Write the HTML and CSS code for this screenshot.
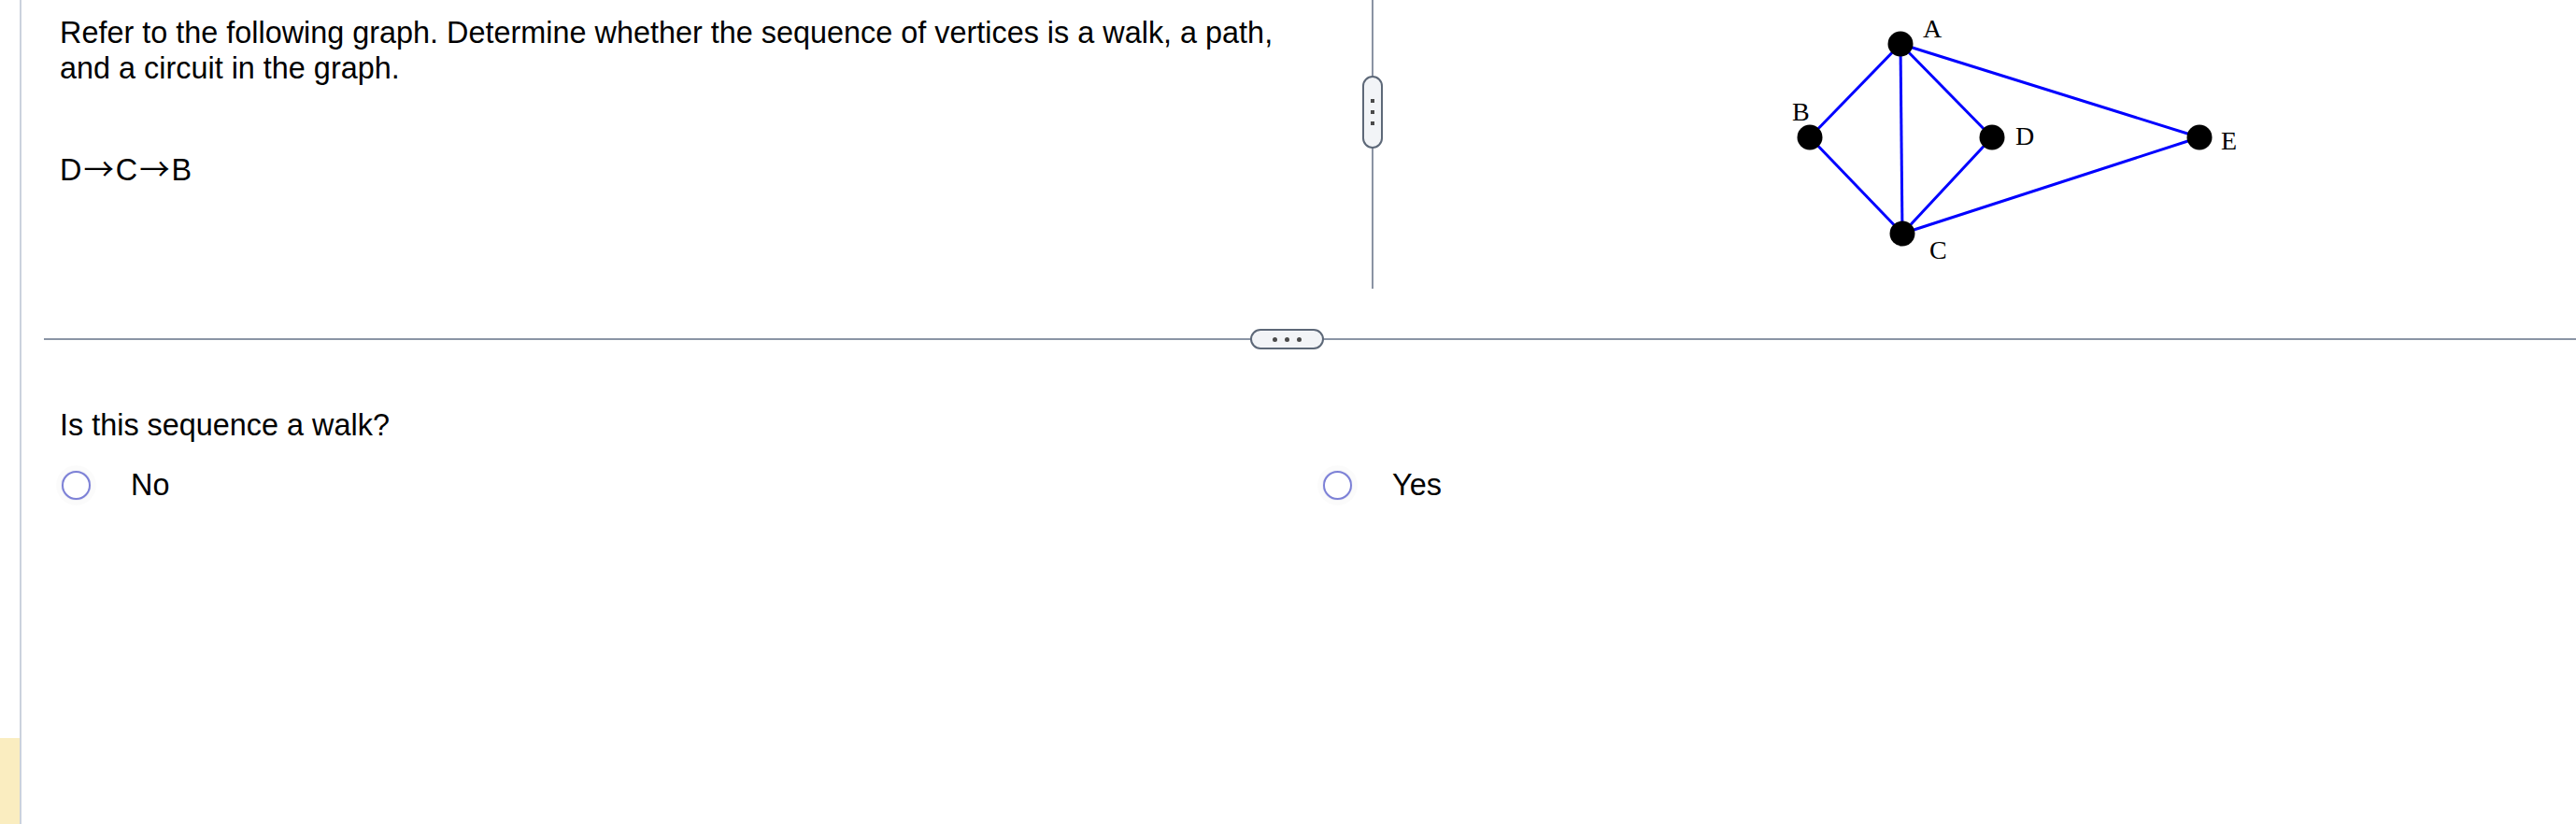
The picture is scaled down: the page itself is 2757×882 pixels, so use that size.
FILE: index.html
```html
<!DOCTYPE html>
<html>
<head>
<meta charset="utf-8">
<link rel="stylesheet" href="styles.css">
</head>
<body>
<div class="page">
  <div class="gutter"><div class="flag"></div></div>
  <div class="main">
    <div class="top">
      <div class="left-pane">
        <p class="prompt">Refer to the following graph. Determine whether the sequence of vertices is a walk, a path,<br>and a circuit in the graph.</p>
        <p class="seq">D<span class="arr">→</span>C<span class="arr">→</span>B</p>
      </div>
      <div class="vdivider">
        <div class="vhandle"><span></span><span></span><span></span></div>
      </div>
      <div class="right-pane">
        <svg class="graph" width="560" height="300" viewBox="0 0 560 300">
          <g stroke="#0000ff" stroke-width="3" fill="none">
            <line x1="154" y1="47" x2="57" y2="147"/>
            <line x1="154" y1="47" x2="156" y2="250"/>
            <line x1="154" y1="47" x2="252" y2="147"/>
            <line x1="154" y1="47" x2="474" y2="147"/>
            <line x1="57" y1="147" x2="156" y2="250"/>
            <line x1="252" y1="147" x2="156" y2="250"/>
            <line x1="474" y1="147" x2="156" y2="250"/>
          </g>
          <g fill="#000">
            <circle cx="154" cy="47" r="13.5"/>
            <circle cx="57" cy="147" r="13.5"/>
            <circle cx="252" cy="147" r="13.5"/>
            <circle cx="156" cy="250" r="13.5"/>
            <circle cx="474" cy="147" r="13.5"/>
          </g>
          <g class="lbl">
            <text x="178" y="40">A</text>
            <text x="38" y="129">B</text>
            <text x="277" y="155">D</text>
            <text x="185" y="277">C</text>
            <text x="497" y="160">E</text>
          </g>
        </svg>
      </div>
    </div>
    <div class="hsplit">
      <div class="hhandle"><span></span><span></span><span></span></div>
    </div>
    <div class="question">
      <p class="qtext">Is this sequence a walk?</p>
      <div class="options">
        <label class="opt"><span class="radio"></span><span class="otext">No</span></label>
        <label class="opt"><span class="radio"></span><span class="otext">Yes</span></label>
      </div>
    </div>
  </div>
</div>
</body>
</html>
```
FILE: styles.css
```css
html, body {
  margin: 0;
  padding: 0;
  background: #fff;
}
body {
  font-family: "Liberation Sans", Arial, sans-serif;
  color: #000;
}
.page {
  display: flex;
  width: 2757px;
  height: 882px;
  overflow: hidden;
}
.gutter {
  width: 21px;
  flex: none;
  border-right: 2px solid #cbd2dd;
  display: flex;
  flex-direction: column;
  justify-content: flex-end;
}
.flag {
  height: 92px;
  background: #faedc0;
}
.main {
  flex: 1;
  padding-left: 24px;
  display: flex;
  flex-direction: column;
}
.top {
  display: flex;
  height: 309px;
}
.left-pane {
  width: 1421px;
  flex: none;
  padding-left: 17px;
  padding-top: 15.5px;
  box-sizing: border-box;
}
.prompt, .seq, .qtext {
  margin: 0;
  font-size: 32.4px;
  line-height: 38.3px;
}
.seq {
  margin-top: 68.4px;
}
.arr {
  font-family: "Noto Sans CJK JP", sans-serif;
  padding: 0 2px;
}
.vdivider {
  width: 2px;
  flex: none;
  background: #8a93a3;
  position: relative;
}
.vhandle {
  position: absolute;
  top: 81px;
  left: -10px;
  width: 18px;
  height: 74px;
  border: 2px solid #5d6878;
  border-radius: 11px;
  background: #f2f4f7;
  display: flex;
  flex-direction: column;
  align-items: center;
  justify-content: center;
  gap: 8px;
}
.vhandle span {
  width: 4px;
  height: 4px;
  background: #4a4a4a;
}
.right-pane {
  flex: 1;
}
.graph {
  display: block;
  margin-left: 410px;
}
.lbl text {
  font-family: "Liberation Serif", "Times New Roman", serif;
  font-size: 28px;
  fill: #000;
}
.hsplit {
  margin-top: 53px;
  height: 2px;
  background: #8a94a5;
  position: relative;
}
.hhandle {
  position: absolute;
  left: 1291px;
  top: -10px;
  width: 75px;
  height: 18px;
  border: 2px solid #5d6878;
  border-radius: 11px;
  background: #f2f4f7;
  display: flex;
  align-items: center;
  justify-content: center;
  gap: 8px;
}
.hhandle span {
  width: 5px;
  height: 5px;
  border-radius: 50%;
  background: #4a4a4a;
}
.question {
  padding-left: 17px;
  padding-top: 72px;
}
.options {
  display: grid;
  grid-template-columns: 1350px 1fr;
  margin-top: 25px;
}
.opt {
  display: flex;
  align-items: center;
  height: 40px;
  padding-left: 2px;
}
.radio {
  width: 27px;
  height: 27px;
  border: 2px solid #7c80d6;
  border-radius: 50%;
  box-shadow: 0 0 1px rgba(90, 95, 200, 0.6), 0 0 0 6px rgba(0, 0, 0, 0.015);
  flex: none;
}
.otext {
  margin-left: 43px;
  font-size: 32.4px;
  line-height: 38.3px;
}
```
